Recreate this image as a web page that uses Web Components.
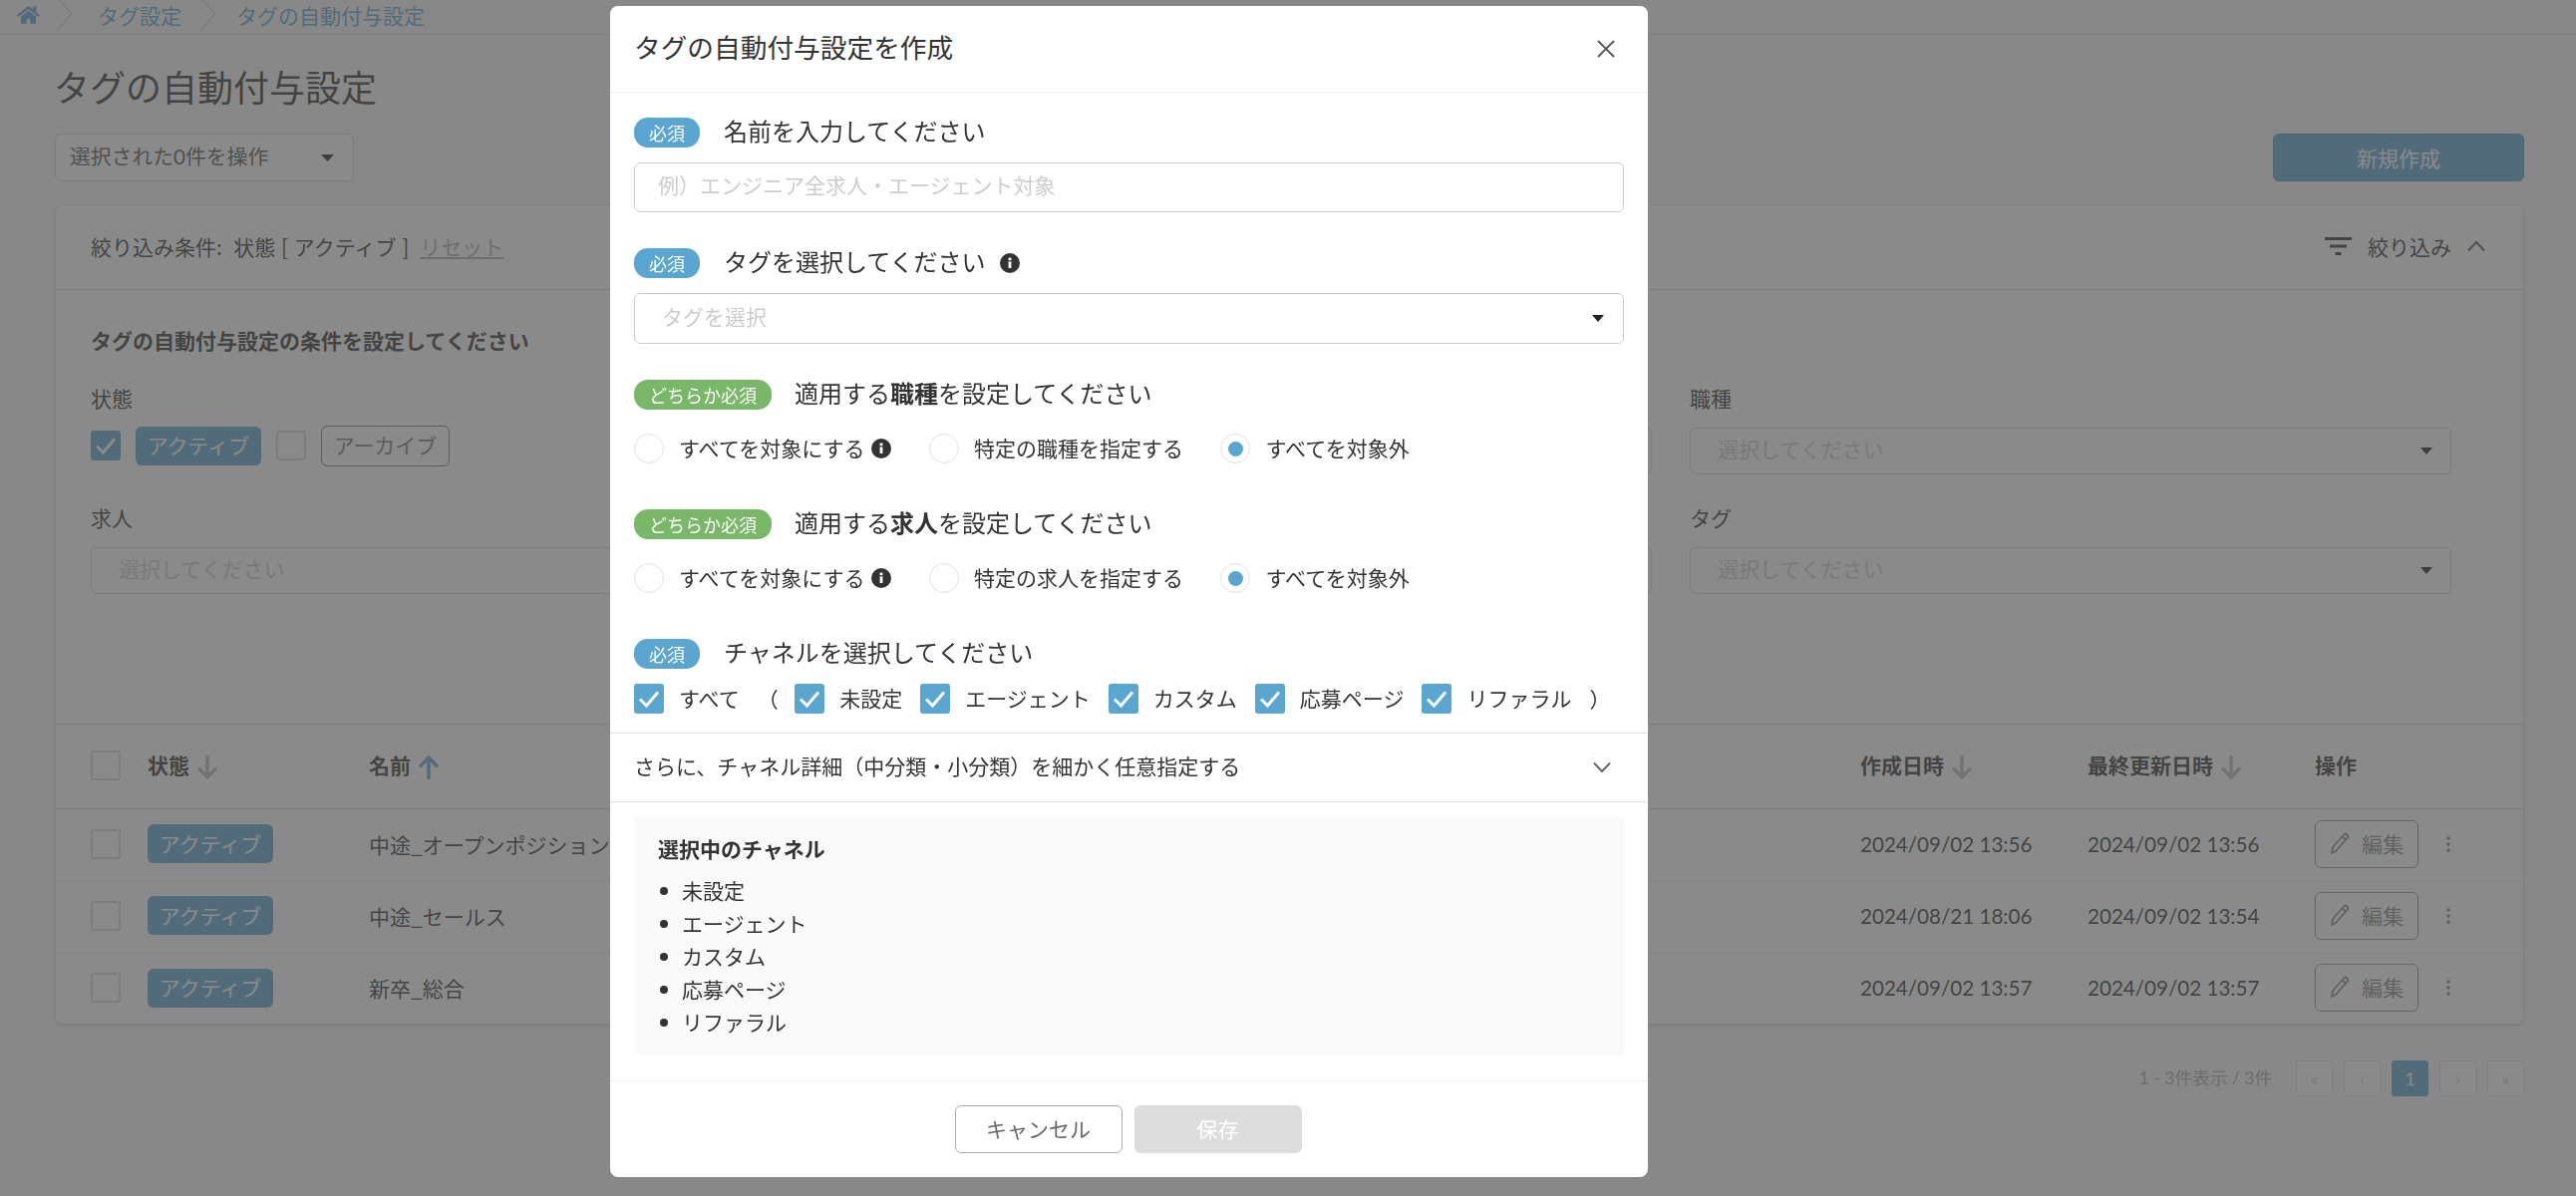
<!DOCTYPE html>
<html lang="ja"><head><meta charset="utf-8"><title>タグの自動付与設定</title>
<style>
html,body{margin:0;height:1200px;overflow:hidden;background:#f9f9f9}
body{font:21px/30px "Noto Sans CJK JP","Noto Sans",sans-serif;color:#333}
</style></head><body><x-page></x-page><x-dialog></x-dialog>
<script>
const def=(name,css,html)=>customElements.define(name,class extends HTMLElement{
  connectedCallback(){ if(this.shadowRoot) return;
    const r=this.attachShadow({mode:'open'});
    const h=typeof html==='function'?html(this):html;
    r.innerHTML='<style>'+css+'</style>'+h; }
});
const CHECK='<svg viewBox="0 0 30 30" width="30" height="30"><polyline points="6,15.5 12.5,22 24,8.5" fill="none" stroke="#fff" stroke-width="3"/></svg>';
const BLUE='#5ba5d1';
def('x-badge',`:host{display:inline-flex;align-items:center;justify-content:center;height:30px;border-radius:14px;background:${BLUE};color:#fff;font-size:18px;line-height:30px;padding:0 15px;box-sizing:border-box;flex:none}:host([tone=green]){background:#79b869}`,'<slot></slot>');
def('x-tag',`:host{display:inline-flex;align-items:center;justify-content:center;width:126px;height:39px;padding-bottom:2px;border-radius:6px;background:${BLUE};color:#fff;flex:none;box-sizing:border-box}:host([outline]){width:129px;height:41px;background:#fff;border:1.5px solid #777;color:#777}`,'<slot></slot>');
def('x-check',`:host{display:inline-block;width:30px;height:30px;border-radius:3px;box-sizing:border-box;flex:none;border:2px solid #ddd;background:#fff}:host([checked]){border:0;background:${BLUE}}svg{display:block}`,e=>e.hasAttribute('checked')?CHECK:'');
def('x-radio',`:host{display:inline-flex;align-items:center;justify-content:center;width:30px;height:30px;border-radius:50%;box-sizing:border-box;flex:none;border:1.5px solid #e0e0e0;background:#fff}i{width:15px;height:15px;border-radius:50%;background:${BLUE}}`,e=>e.hasAttribute('checked')?'<i></i>':'');
def('x-info',`:host{display:inline-block;width:20px;height:20px;flex:none}svg{display:block}`,'<svg viewBox="0 0 20 20" width="20" height="20"><circle cx="10" cy="10" r="10" fill="#333"/><rect x="8.6" y="8.4" width="2.8" height="6.6" fill="#fff"/><rect x="8.6" y="4.6" width="2.8" height="2.6" fill="#fff"/></svg>');
def('x-select',`:host{display:flex;align-items:center;justify-content:space-between;box-sizing:border-box;height:47px;border:1.5px solid #d5d5d5;border-radius:6px;padding:0 18px 0 27px;color:#ccc;background:#fff}:host([big]){height:51px;border-color:#ccc;padding:0 19px 0 27px}svg{display:block;flex:none}::slotted(span){padding-bottom:5px}`,'<slot></slot><svg width="12" height="7" viewBox="0 0 12 7"><path d="M0 0H12L6 7Z" fill="#222"/></svg>');
def('x-arrow',`:host{display:inline-block;width:20px;height:24px;flex:none;margin-left:8px;vertical-align:middle}svg{display:block}`,e=>{const c=e.hasAttribute('up')?BLUE:'#bdbdbd';const d=e.hasAttribute('up')?'M10 23V2M2 10.5L10 2L18 10.5':'M10 1V22M2 13.5L10 22L18 13.5';return `<svg viewBox="0 0 20 24" width="20" height="24"><path d="${d}" fill="none" stroke="${c}" stroke-width="3.4" stroke-linecap="round" stroke-linejoin="round"/></svg>`});
def('x-chevron',`:host{display:inline-block;width:18px;height:10px;flex:none}svg{display:block}`,e=>`<svg viewBox="0 0 18 10" width="18" height="10"><path d="${e.hasAttribute('up')?'M1 9.5L9 1L17 9.5':'M1 .5L9 9L17 .5'}" fill="none" stroke="${e.getAttribute('color')||'#555'}" stroke-width="2"/></svg>`);
def('x-crumb',`:host{display:flex;align-items:center;height:35px;box-sizing:border-box;border-bottom:1px solid #dcdcdc;color:${BLUE};padding-left:17px;padding-bottom:5px}svg{display:block;flex:none}.sep{margin:0 25px 0 16px}span{white-space:nowrap}`,
`<svg width="23" height="20" viewBox="0 0 576 512"><path fill="${BLUE}" d="M280.37 148.26L96 300.11V464a16 16 0 0 0 16 16l112.06-.29a16 16 0 0 0 15.92-16V368a16 16 0 0 1 16-16h64a16 16 0 0 1 16 16v95.64a16 16 0 0 0 16 16.05L464 480a16 16 0 0 0 16-16V300L295.67 148.26a12.19 12.19 0 0 0-15.3 0zM571.6 251.47L488 182.56V44.05a12 12 0 0 0-12-12h-56a12 12 0 0 0-12 12v72.61L318.47 43a48 48 0 0 0-61 0L4.34 251.47a12 12 0 0 0-1.6 16.9l25.5 31A12 12 0 0 0 45.15 301l235.22-193.74a12.19 12.19 0 0 1 15.3 0L530.9 301a12 12 0 0 0 16.9-1.6l25.5-31a12 12 0 0 0-1.7-16.93z"/></svg>
<svg class="sep" width="17" height="36" viewBox="0 0 17 36"><path d="M1 0L16 17L1 34" fill="none" stroke="#d5d5d5" stroke-width="1.5"/></svg><span>タグ設定</span>
<svg class="sep" style="margin-left:18px;margin-right:20px" width="17" height="36" viewBox="0 0 17 36"><path d="M1 0L16 17L1 34" fill="none" stroke="#d5d5d5" stroke-width="1.5"/></svg><span>タグの自動付与設定</span>`);
def('x-tr',`:host{display:grid;grid-template-columns:57px 222px 1496px 228px 228px 1fr;align-items:center;height:72px;box-sizing:border-box;padding:0 0 2px 35px;border-bottom:1px solid #eee}:host([head]){height:85px;border-bottom:1px solid #d5d5d5;font-weight:700}:host([head]) ::slotted(span){padding-bottom:2px}:host([last]){border-bottom:0;height:71px;padding-bottom:1px}::slotted(.date){font-family:Lato,"Noto Sans CJK JP",sans-serif;font-size:20.6px}`,'<slot></slot>');
def('x-edit',`:host{display:flex;align-items:center;gap:10px}b{display:flex;align-items:center;box-sizing:border-box;font-weight:400;width:104px;height:48px;border:1.5px solid #999;border-radius:6px;color:#888;padding:0 0 2px 13px;gap:11px;background:#fff}svg{display:block;flex:none}.k{margin-left:18px}`,
`<b><svg width="22" height="24" viewBox="0 0 22 24"><path d="M3 22l1-6L15 3.5c1-1.1 2.4-1.1 3.4-.2s1.100 2.300.2 3.400L7.500 19.500zM13.500 5.500l4 3.600" fill="none" stroke="#888" stroke-width="1.800" stroke-linejoin="round"/></svg><slot></slot></b><svg class="k" width="4" height="16" viewBox="0 0 4 16"><g fill="#888"><circle cx="2" cy="2" r="1.800"/><circle cx="2" cy="8" r="1.800"/><circle cx="2" cy="14" r="1.800"/></g></svg>`);
def('x-pg',`:host{display:flex;align-items:center;justify-content:center;width:37px;height:36px;box-sizing:border-box;border:1px solid #e2e2e2;border-radius:3px;background:#fff;color:#ccc;font-size:18px;flex:none;font-family:Lato,sans-serif}:host([on]){background:${BLUE};border-color:${BLUE};color:#fff}`,'<slot></slot>');

def('x-card',`:host{display:block;box-sizing:border-box;width:2477px;height:823px;margin-top:23px;background:#fff;border:1px solid #e4e4e4;border-radius:8px;box-shadow:0 2px 3px rgba(0,0,0,.12);overflow:hidden}
.h{display:flex;align-items:center;justify-content:space-between;height:85px;box-sizing:border-box;border-bottom:1px solid #d5d5d5;padding:0 38px 2px 35px}
.h .l{display:flex;white-space:pre;word-spacing:1px}.reset{color:#aaa;text-decoration:underline;margin-left:11px}
.h .r{display:flex;align-items:center}.h .r svg{display:block;margin-right:16px}.h .r span{margin-right:16px}
.f{height:436px;box-sizing:border-box;border-bottom:1px solid #d5d5d5;padding:35px 35px 0}
.t{font-weight:700}
.g{display:grid;grid-template-columns:764px 764px 764px;column-gap:38px;margin-top:28px}
.lb{height:30px}.r1{height:47px;margin-top:15px}.rowgap{margin-bottom:28px}
.st{display:flex;align-items:center;height:42px;margin-top:-3px}.st x-check{margin-right:15px}.st x-tag{margin-right:15px}`,
`<div class="h"><div class="l"><span>絞り込み条件:  状態 [ アクティブ ]</span><span class="reset">リセット</span></div>
<div class="r"><svg width="27" height="18" viewBox="0 0 27 18"><g fill="#333"><rect width="27" height="3"/><rect x="5" y="7.500" width="17" height="3"/><rect x="10.500" y="15" width="6" height="3"/></g></svg><span>絞り込み</span><x-chevron up></x-chevron></div></div>
<div class="f"><div class="t">タグの自動付与設定の条件を設定してください</div>
<div class="g">
<div class="rowgap"><div class="lb">状態</div><div class="r1"><div class="st"><x-check checked></x-check><x-tag>アクティブ</x-tag><x-check></x-check><x-tag outline>アーカイブ</x-tag></div></div></div>
<div class="rowgap"><div class="lb"></div><div class="r1"><x-select></x-select></div></div>
<div class="rowgap"><div class="lb">職種</div><div class="r1"><x-select><span>選択してください</span></x-select></div></div>
<div><div class="lb">求人</div><div class="r1"><x-select><span>選択してください</span></x-select></div></div>
<div><div class="lb"></div><div class="r1"><x-select></x-select></div></div>
<div><div class="lb">タグ</div><div class="r1"><x-select><span>選択してください</span></x-select></div></div>
</div></div>
<x-tr head><x-check></x-check><span>状態<x-arrow></x-arrow></span><span>名前<x-arrow up></x-arrow></span><span>作成日時<x-arrow></x-arrow></span><span>最終更新日時<x-arrow></x-arrow></span><span>操作</span></x-tr>
<x-tr><x-check></x-check><span><x-tag>アクティブ</x-tag></span><span>中途_オープンポジション</span><span class="date">2024/09/02 13:56</span><span class="date">2024/09/02 13:56</span><x-edit>編集</x-edit></x-tr>
<x-tr><x-check></x-check><span><x-tag>アクティブ</x-tag></span><span>中途_セールス</span><span class="date">2024/08/21 18:06</span><span class="date">2024/09/02 13:54</span><x-edit>編集</x-edit></x-tr>
<x-tr last><x-check></x-check><span><x-tag>アクティブ</x-tag></span><span>新卒_総合</span><span class="date">2024/09/02 13:57</span><span class="date">2024/09/02 13:57</span><x-edit>編集</x-edit></x-tr>`);

def('x-page',`:host{display:block}
.m{padding:27px 52px 0 55px}
h1{font-size:36px;line-height:48px;font-weight:400;margin:0 0 0 -1px;color:#333}
.b{display:flex;justify-content:space-between;margin-top:24px}
.s{display:flex;align-items:center;justify-content:space-between;box-sizing:border-box;width:300px;height:48px;border:1.500px solid #d5d5d5;border-radius:6px;padding:0 19px 2px 14px;background:#fff;color:#555;font-size:20.8px;font-family:Lato,"Noto Sans CJK JP",sans-serif}
.s svg{margin-top:3px}
.n{display:flex;align-items:center;justify-content:center;box-sizing:border-box;width:252px;height:48px;border-radius:6px;background:${BLUE};border:1.500px solid #4a90bb;color:#fff}
.p{display:flex;justify-content:flex-end;align-items:center;gap:11px;margin-top:36px}.p span{color:#aaa;font-size:17.6px;margin-right:13px;font-family:Lato,"Noto Sans CJK JP",sans-serif}`,
`<x-crumb></x-crumb><div class="m"><h1>タグの自動付与設定</h1>
<div class="b"><div class="s">選択された0件を操作<svg width="13" height="7" viewBox="0 0 13 7"><path d="M0 0H13L6.500 7Z" fill="#222"/></svg></div><div class="n">新規作成</div></div>
<x-card></x-card>
<div class="p"><span>1 - 3件表示 / 3件</span><x-pg>«</x-pg><x-pg>‹</x-pg><x-pg on>1</x-pg><x-pg>›</x-pg><x-pg>»</x-pg></div></div>`);

def('x-head-line',`:host{display:flex;align-items:center;height:30px;font-size:24px;line-height:30px;gap:24px;color:#333}:host(.g){gap:23px}::slotted(span){padding-bottom:4px}::slotted(x-info){margin-left:-10px}`,'<slot></slot>');
def('x-opt',`:host{display:flex;align-items:center;height:30px;gap:15px;flex:none;white-space:nowrap}::slotted(span){padding-bottom:2px}::slotted(x-info){margin-left:-8px}`,'<slot></slot>');
def('x-dialog',`:host{position:fixed;inset:0;background:rgba(77,77,77,.657);z-index:10;display:block;padding:6px 0 0 612px;box-sizing:border-box}
.d{width:1041px;height:1175px;background:#fff;border-radius:8px;display:flex;flex-direction:column;box-sizing:border-box}
.hd{display:flex;align-items:center;justify-content:space-between;height:87px;flex:none;box-sizing:border-box;border-bottom:1px solid #eee;padding:0 33px 0 24px;font-size:26.7px}
.hd span{padding-bottom:5px}
.hd svg{display:block}
.bd{flex:1;padding:25px 24px 0}
.in{box-sizing:border-box;height:50px;border:1.500px solid #ccc;border-radius:6px;margin-top:15px;padding-left:23px;line-height:42px;color:#ccc}
x-select{margin-top:15px}
.sec{margin-top:36px}.sec.w{margin-top:46px}
.rad{display:flex;gap:37.500px;margin-top:24px}
.ch{display:flex;gap:18px;margin-top:15px;align-items:center}.ch .pa{margin-right:-1.500px;white-space:nowrap}
.ac{display:flex;align-items:center;justify-content:space-between;height:70px;box-sizing:border-box;margin:19px -24px 0;padding:0 37px 0 24px;border-top:1.500px solid #e2e2e2;border-bottom:1.500px solid #e2e2e2}
.ac span{padding-bottom:5px}
.bx{height:240px;box-sizing:border-box;margin-top:14px;background:#fafafa;padding:17px 24px 0}
.bx b{display:block;line-height:30px}
ul{margin:11px 0 0;padding:0;list-style:none}
li{display:flex;align-items:center;height:33px;gap:14px;line-height:33px}li::before{content:"";width:8px;height:8px;border-radius:50%;background:#333;margin-left:2px}
.ft{flex:none;height:97px;box-sizing:border-box;border-top:1px solid #eee;display:flex;justify-content:center;gap:12px;padding-top:24px;padding-right:2px}
.btn{display:flex;align-items:center;justify-content:center;box-sizing:border-box;width:168px;height:48px;border-radius:6px;padding-bottom:2px}
.ca{border:1.500px solid #aaa;color:#666;background:#fff}.sv{background:#ddd;color:#fff}`,
`<div class="d"><div class="hd"><span>タグの自動付与設定を作成</span><svg width="18" height="18" viewBox="0 0 18 18"><path d="M1 1L17 17M17 1L1 17" stroke="#555" stroke-width="1.800" fill="none"/></svg></div>
<div class="bd">
<x-head-line><x-badge>必須</x-badge><span>名前を入力してください</span></x-head-line>
<div class="in">例）エンジニア全求人・エージェント対象</div>
<div class="sec"><x-head-line><x-badge>必須</x-badge><span>タグを選択してください</span><x-info></x-info></x-head-line>
<x-select big><span>タグを選択</span></x-select></div>
<div class="sec"><x-head-line class="g"><x-badge tone="green">どちらか必須</x-badge><span>適用する<b>職種</b>を設定してください</span></x-head-line>
<div class="rad"><x-opt><x-radio></x-radio><span>すべてを対象にする</span><x-info></x-info></x-opt><x-opt><x-radio></x-radio><span>特定の職種を指定する</span></x-opt><x-opt><x-radio checked></x-radio><span>すべてを対象外</span></x-opt></div></div>
<div class="sec w"><x-head-line class="g"><x-badge tone="green">どちらか必須</x-badge><span>適用する<b>求人</b>を設定してください</span></x-head-line>
<div class="rad"><x-opt><x-radio></x-radio><span>すべてを対象にする</span><x-info></x-info></x-opt><x-opt><x-radio></x-radio><span>特定の求人を指定する</span></x-opt><x-opt><x-radio checked></x-radio><span>すべてを対象外</span></x-opt></div></div>
<div class="sec w"><x-head-line><x-badge>必須</x-badge><span>チャネルを選択してください</span></x-head-line>
<div class="ch"><x-opt><x-check checked></x-check><span>すべて</span></x-opt><span class="pa">（</span><x-opt><x-check checked></x-check><span>未設定</span></x-opt><x-opt><x-check checked></x-check><span>エージェント</span></x-opt><x-opt><x-check checked></x-check><span>カスタム</span></x-opt><x-opt><x-check checked></x-check><span>応募ページ</span></x-opt><x-opt><x-check checked></x-check><span>リファラル</span></x-opt><span class="pa">）</span></div></div>
<div class="ac"><span>さらに、チャネル詳細（中分類・小分類）を細かく任意指定する</span><x-chevron color="#666"></x-chevron></div>
<div class="bx"><b>選択中のチャネル</b><ul><li>未設定</li><li>エージェント</li><li>カスタム</li><li>応募ページ</li><li>リファラル</li></ul></div>
</div>
<div class="ft"><div class="btn ca">キャンセル</div><div class="btn sv">保存</div></div></div>`);
</script></body></html>
